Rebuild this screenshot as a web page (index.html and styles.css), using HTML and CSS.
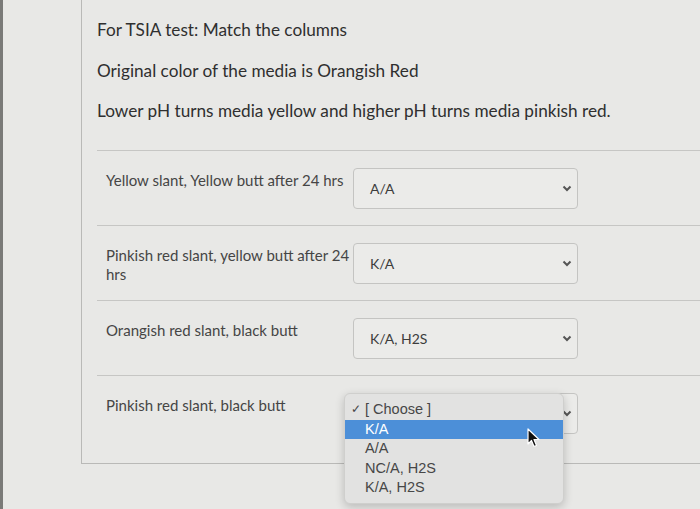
FILE: index.html
```html
<!DOCTYPE html>
<html lang="en">
<head>
    <meta charset="utf-8"/>
    <title>Quiz - Match the columns</title>
    <link rel="stylesheet" href="styles.css">
</head>
<body>
    <div class="screen">
        <div class="question">
            <div class="question-text">
                <p>For TSIA test: Match the columns</p>
                <p>Original color of the media is Orangish Red</p>
                <p>Lower pH turns media yellow and higher pH turns media pinkish red.</p>
            </div>

            <div class="match-row">
                <label>Yellow slant, Yellow butt after 24 hrs</label>
                <div class="select">
                    <span>A/A</span>
                    <svg class="chevron" width="10" height="7" viewBox="0 0 10 7"><path d="M1.5 1.5 L5 5 L8.5 1.5" fill="none" stroke="#555" stroke-width="2"/></svg>
                </div>
            </div>
            <div class="match-row">
                <label>Pinkish red slant, yellow butt after 24 hrs</label>
                <div class="select">
                    <span>K/A</span>
                    <svg class="chevron" width="10" height="7" viewBox="0 0 10 7"><path d="M1.5 1.5 L5 5 L8.5 1.5" fill="none" stroke="#555" stroke-width="2"/></svg>
                </div>
            </div>
            <div class="match-row">
                <label>Orangish red slant, black butt</label>
                <div class="select">
                    <span>K/A, H2S</span>
                    <svg class="chevron" width="10" height="7" viewBox="0 0 10 7"><path d="M1.5 1.5 L5 5 L8.5 1.5" fill="none" stroke="#555" stroke-width="2"/></svg>
                </div>
            </div>
            <div class="match-row last">
                <label>Pinkish red slant, black butt</label>
                <div class="select open">
                    <span></span>
                    <svg class="chevron" width="10" height="7" viewBox="0 0 10 7"><path d="M1.5 1.5 L5 5 L8.5 1.5" fill="none" stroke="#555" stroke-width="2"/></svg>

                    <ul class="menu">
                        <li class="checked">[ Choose ]</li>
                        <li class="active">K/A</li>
                        <li>A/A</li>
                        <li>NC/A, H2S</li>
                        <li>K/A, H2S</li>
                    </ul>
                    <svg class="cursor" width="14" height="21" viewBox="0 0 14 21">
                        <path d="M1 1 L1 16 L4.5 12.5 L7 18.5 L9.5 17.5 L7 11.5 L12 11.5 Z" fill="#111" stroke="#fff" stroke-width="1.2" stroke-linejoin="round"/>
                    </svg>
                </div>
            </div>
        </div>
    </div>
</body>
</html>
```

FILE: styles.css
```css
body {
    margin: 0;
    background-color: #e8e8e6;
    font-family: Lato, 'Open Sans', sans-serif;
    color: #2f2f2f;
}

.screen {
    height: 509px;
    border-left: 3px solid #7a7a78;
    box-sizing: border-box;
    padding-left: 78px;
    overflow: hidden;
}

.question {
    border-left: 1px solid #b9b9b7;
    border-bottom: 1px solid #b9b9b7;
    padding: 0 0 13px 15px;
    width: 640px;
}

.question-text {
    padding-top: 18px;
    padding-bottom: 28px;
}

.question-text p {
    margin: 0 0 17.5px;
    font-size: 17.2px;
    line-height: 23px;
}

.question-text p:last-child {
    margin-bottom: 0;
}

.match-row {
    display: grid;
    grid-template-columns: 247px 225px;
    align-items: start;
    border-top: 1px solid #c6c6c4;
    padding: 17px 0 16px 9px;
}

.match-row label {
    font-size: 15px;
    line-height: 19px;
    color: #454545;
    padding-top: 3px;
}

.select {
    position: relative;
    height: 41px;
    box-sizing: border-box;
    border: 1px solid #c4c4c2;
    border-radius: 4px;
    background-color: #ebebe9;
    display: flex;
    align-items: center;
    justify-content: space-between;
    padding: 0 5px 0 16px;
    font-size: 14px;
    color: #3c3c3c;
}

.menu {
    position: absolute;
    left: -10px;
    top: -1px;
    width: 218px;
    margin: 0;
    padding: 6px 0 5px;
    list-style: none;
    background-color: #e2e2e1;
    border: 1px solid #cfcfcd;
    border-radius: 6px;
    box-shadow: 0 3px 10px rgba(0, 0, 0, 0.2);
    font-family: 'Liberation Sans', Arial, sans-serif;
    font-size: 14.5px;
    color: #474747;
}

.menu li {
    height: 19.5px;
    line-height: 19.5px;
    padding-left: 20px;
    position: relative;
}

.menu li.checked::before {
    content: '\2713';
    position: absolute;
    left: 6px;
    font-size: 12px;
}

.menu li.active {
    background-color: #4c8fd8;
    color: #fff;
}

.cursor {
    position: absolute;
    left: 173px;
    top: 34px;
}
```
